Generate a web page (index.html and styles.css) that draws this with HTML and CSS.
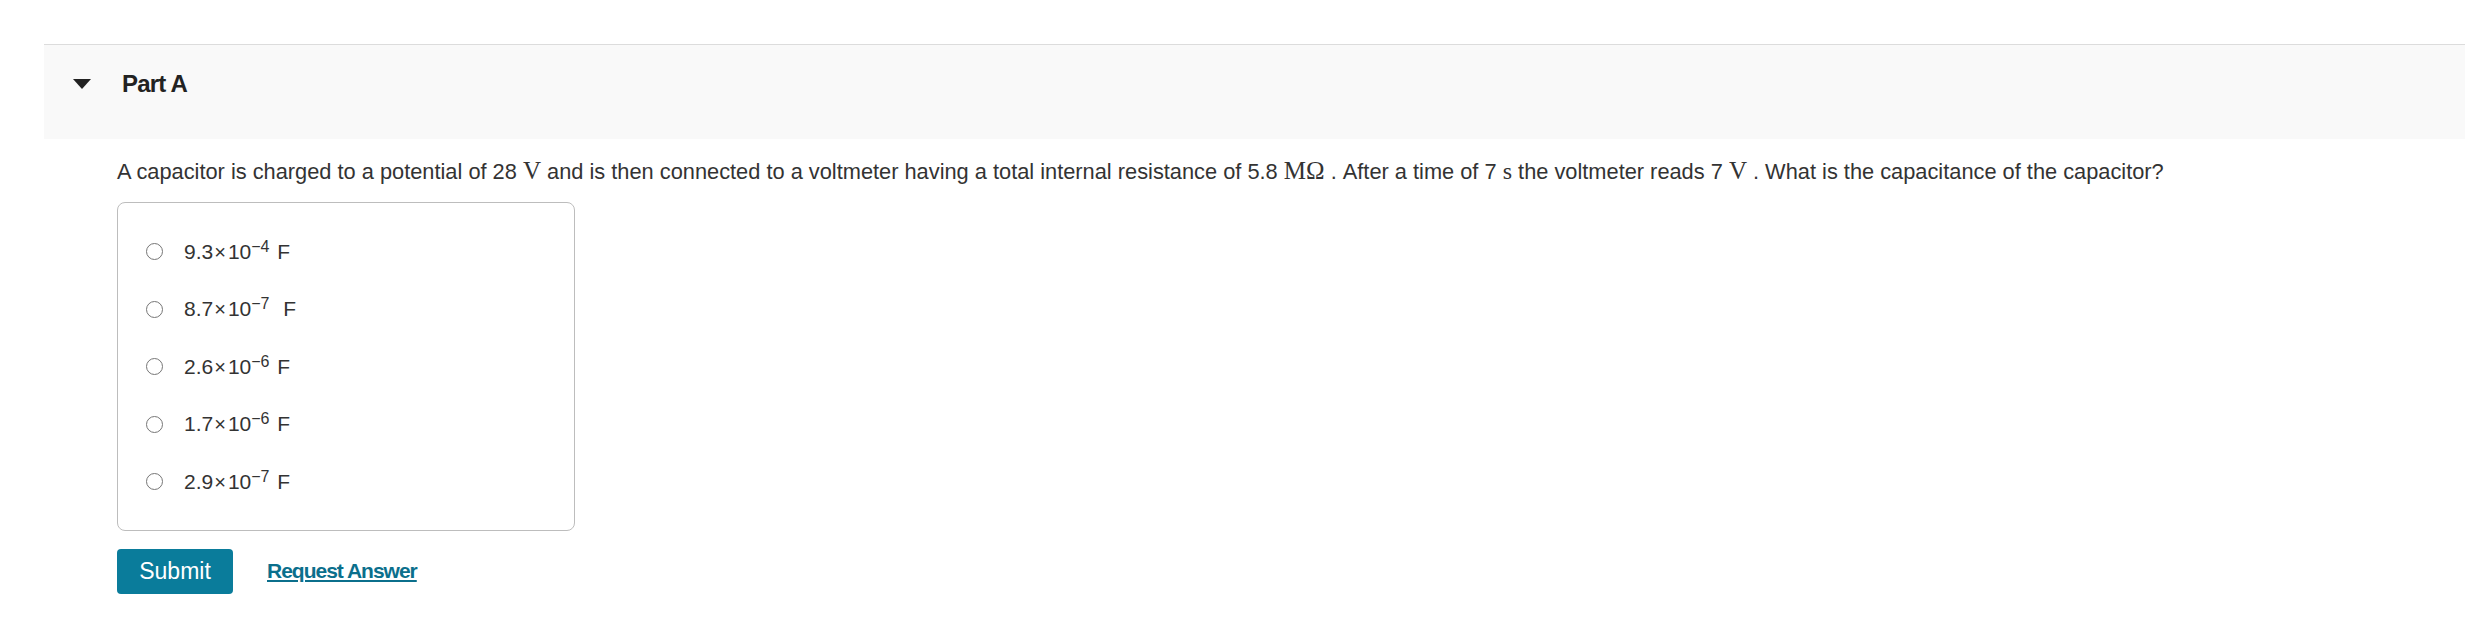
FILE: index.html
```html
<!DOCTYPE html>
<html>
<head>
<meta charset="utf-8">
<link rel="stylesheet" href="styles.css">
</head>
<body>
<div class="part">
  <div class="part-header">
    <span class="caret"></span>
    <span class="part-title">Part A</span>
  </div>
  <div class="part-body">
    <p class="question">A capacitor is charged to a potential of 28 <span class="m">V</span> and is then connected to a voltmeter having a total internal resistance of 5.8 <span class="m">MΩ</span> . After a time of 7 <span class="m ms">s</span> the voltmeter reads 7 <span class="m">V</span> . What is the capacitance of the capacitor?</p>
    <div class="choices">
      <label class="choice"><span class="radio"></span><span class="val">9.3<span class="x">×</span>10<sup>−4</sup> F</span></label>
      <label class="choice"><span class="radio"></span><span class="val">8.7<span class="x">×</span>10<sup>−7</sup>&nbsp; F</span></label>
      <label class="choice"><span class="radio"></span><span class="val">2.6<span class="x">×</span>10<sup>−6</sup> F</span></label>
      <label class="choice"><span class="radio"></span><span class="val">1.7<span class="x">×</span>10<sup>−6</sup> F</span></label>
      <label class="choice"><span class="radio"></span><span class="val">2.9<span class="x">×</span>10<sup>−7</sup> F</span></label>
    </div>
    <div class="actions">
      <button class="submit">Submit</button>
      <a class="request" href="#">Request Answer</a>
    </div>
  </div>
</div>
</body>
</html>
```
FILE: styles.css
```css
html, body {
  margin: 0;
  padding: 0;
  background: #ffffff;
  font-family: "Liberation Sans", Arial, sans-serif;
  color: #333333;
}

.part {
  margin-top: 44px;
  margin-left: 44px;
  border-top: 1px solid #dcdcdc;
}

.part-header {
  height: 94px;
  box-sizing: border-box;
  background: #f9f9f9;
  display: flex;
  align-items: flex-start;
  padding-left: 29px;
  padding-top: 25px;
}

.caret {
  width: 0;
  height: 0;
  border-left: 9px solid transparent;
  border-right: 9px solid transparent;
  border-top: 10px solid #222222;
  margin-top: 9px;
}

.part-title {
  margin-left: 31px;
  font-size: 24px;
  line-height: 28px;
  font-weight: bold;
  letter-spacing: -0.8px;
  color: #222222;
}

.part-body {
  padding-left: 73px;
}

.question {
  margin: 18px 0 0 0;
  font-size: 21.8px;
  line-height: 29px;
  color: #333333;
}

.m {
  font-family: "Liberation Serif", "Times New Roman", serif;
  font-size: 25px;
  line-height: 1;
}

.ms {
  font-size: 24px;
}

.choices {
  margin-top: 16px;
  width: 458px;
  box-sizing: border-box;
  border: 1px solid #bdbdbd;
  border-radius: 8px;
  padding: 20px 0 19px 0;
}

.choice {
  height: 57.5px;
  display: flex;
  align-items: center;
  padding-left: 28px;
}

.radio {
  width: 17px;
  height: 17px;
  box-sizing: border-box;
  border: 1.5px solid #767676;
  border-radius: 50%;
  background: #ffffff;
  flex: none;
}

.val {
  margin-left: 21px;
  font-size: 21px;
  line-height: 24px;
  color: #333333;
}

.x {
  margin: 0 2px 0 1px;
  font-size: 20px;
}

.val sup {
  font-size: 16px;
  line-height: 0;
  vertical-align: 7px;
  margin-right: 2px;
}

.actions {
  margin-top: 18px;
  display: flex;
  align-items: center;
}

.submit {
  width: 116px;
  height: 45px;
  border: none;
  border-radius: 4px;
  background: #0a7c9b;
  color: #ffffff;
  font-family: "Liberation Sans", Arial, sans-serif;
  font-size: 23px;
  padding: 0;
}

.request {
  margin-left: 34px;
  font-size: 21px;
  font-weight: bold;
  letter-spacing: -1px;
  color: #0b6f8c;
  text-decoration: underline;
}
```
